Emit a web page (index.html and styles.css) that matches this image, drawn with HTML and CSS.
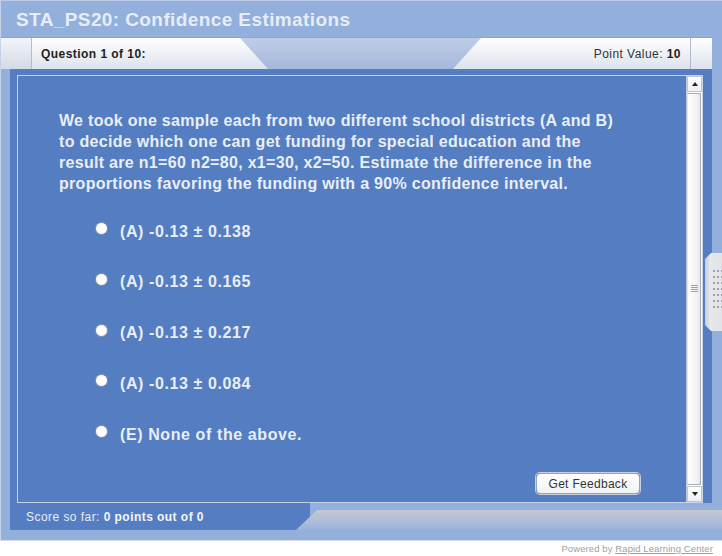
FILE: index.html
```html
<!DOCTYPE html>
<html>
<head>
<meta charset="utf-8">
<link rel="stylesheet" href="styles.css">
</head>
<body>
<div class="frame">
  <div class="titlebar">STA_PS20: Confidence Estimations</div>
  <div class="tabbar">
    <div class="tab-left"><div class="stub"></div><span class="qnum">Question 1 of 10:</span></div>
    <div class="tab-gap"></div>
    <div class="tab-right"><span class="pv">Point Value: <b>10</b></span><div class="stub-r"></div></div>
  </div>
  <div class="main">
    <div class="content">
      <div class="qarea">
        <p class="question">We took one sample each from two different school districts (A and B) to decide which one can get funding for special education and the result are n1=60 n2=80, x1=30, x2=50. Estimate the difference in the proportions favoring the funding with a 90% confidence interval.</p>
        <ul class="options">
          <li><span class="radio"></span>(A) -0.13 ± 0.138</li>
          <li><span class="radio"></span>(A) -0.13 ± 0.165</li>
          <li><span class="radio"></span>(A) -0.13 ± 0.217</li>
          <li><span class="radio"></span>(A) -0.13 ± 0.084</li>
          <li><span class="radio"></span>(E) None of the above.</li>
        </ul>
        <div class="actions"><button class="btn">Get Feedback</button></div>
      </div>
      <div class="scrollbar">
        <div class="sbtn"><span class="tri-up"></span></div>
        <div class="track"><span class="grip"></span></div>
        <div class="sbtn"><span class="tri-down"></span></div>
      </div>
    </div>
  </div>
  <div class="footer">
    <div class="score">Score so far: <b>0 points out of 0</b></div>
    <div class="ftab"></div>
  </div>
  <div class="handle">
    <div class="dots">
      <i></i><i></i><i></i><i></i><i></i><i></i><i></i><i></i><i></i><i></i><i></i><i></i><i></i><i></i><i></i><i></i><i></i><i></i><i></i><i></i><i></i>
    </div>
  </div>
</div>
<div class="powered">Powered by <a href="#">Rapid Learning Center</a></div>
</body>
</html>
```

FILE: styles.css
```css
* { box-sizing: border-box; }
body {
  margin: 0;
  width: 722px;
  background: #fff;
  font-family: "Liberation Sans", Arial, sans-serif;
}
.frame {
  position: relative;
  width: 722px;
  height: 541px;
  background: #93afdc;
  border-top: 1px solid #bccbe6;
  border-left: 1px solid #c6d2e8;
  border-bottom: 1px solid #d6dae2;
}
.titlebar {
  height: 36px;
  padding-left: 15px;
  line-height: 37px;
  font-size: 19px;
  font-weight: bold;
  color: #e6edf8;
  letter-spacing: 0.4px;
}
.tabbar {
  width: 711px;
  height: 32px;
  display: flex;
  background: linear-gradient(#bfcde6, #a6b9dc);
  border-top: 1px solid #8aa3cf;
}
.tab-left {
  width: 267px;
  display: flex;
  align-items: center;
  background: linear-gradient(#ffffff, #dde2ec);
  clip-path: polygon(0 0, 239px 0, 267px 100%, 0 100%);
}
.stub {
  width: 31px;
  height: 100%;
  border-right: 1px solid #b4bccc;
  background: linear-gradient(#f2f4f8, #d4dae6);
}
.qnum {
  padding-left: 9px;
  font-size: 12px;
  font-weight: bold;
  color: #222;
  letter-spacing: 0.45px;
}
.tab-gap { flex: 1; }
.tab-right {
  width: 259px;
  display: flex;
  align-items: center;
  justify-content: flex-end;
  background: linear-gradient(#ffffff, #dde2ec);
  clip-path: polygon(28px 0, 100% 0, 100% 100%, 0 100%);
}
.pv {
  font-size: 12px;
  color: #333;
  padding-right: 9px;
  letter-spacing: 0.45px;
}
.pv b { color: #222; }
.stub-r {
  width: 22px;
  height: 100%;
  border-left: 1px solid #b4bccc;
}
.main {
  margin-left: 9px;
  width: 702px;
  height: 434px;
  padding: 6px 9px 0 7px;
  background: #557dc1;
}
.content {
  height: 428px;
  display: flex;
  border: 1px solid #c8d2e6;
}
.qarea {
  flex: 1;
  display: flex;
  flex-direction: column;
  padding: 34px 0 0 41px;
}
.question {
  margin: 0;
  width: 562px;
  font-size: 16px;
  line-height: 21px;
  font-weight: bold;
  letter-spacing: 0.3px;
  color: #e8eef8;
}
.options {
  list-style: none;
  margin: 18px 0 0 36px;
  padding: 0;
}
.options li {
  display: flex;
  align-items: center;
  height: 39px;
  margin-top: 11.75px;
  font-size: 16px;
  font-weight: bold;
  letter-spacing: 0.6px;
  color: #e8eef8;
}
.options li:first-child { margin-top: 0; }
.radio {
  width: 13px;
  height: 13px;
  border-radius: 50%;
  background: radial-gradient(circle at 50% 40%, #ffffff 55%, #e4e8ee 100%);
  border: 1px solid #8e96a4;
  margin-right: 12px;
  margin-top: -6px;
}
.actions {
  margin-top: auto;
  margin-bottom: 8px;
  display: flex;
  justify-content: flex-end;
  padding-right: 46px;
}
.btn {
  width: 104px;
  height: 21px;
  padding: 0;
  font-family: "Liberation Sans", Arial, sans-serif;
  font-size: 12px;
  letter-spacing: 0.3px;
  color: #333;
  background: linear-gradient(#ffffff, #f0f2f4);
  border: 1px solid #9aa2ae;
  border-radius: 4px;
  box-shadow: 0 0 0 1px #c6cfdf;
}
.scrollbar {
  width: 16px;
  display: flex;
  flex-direction: column;
  background: #fff;
  border-left: 1px solid #c4cad4;
}
.sbtn {
  height: 16px;
  display: flex;
  align-items: center;
  justify-content: center;
  background: linear-gradient(#ffffff, #eceef2);
  border: 1px solid #c0c6d0;
}
.tri-up {
  width: 0; height: 0;
  border-left: 3px solid transparent;
  border-right: 3px solid transparent;
  border-bottom: 4px solid #222;
}
.tri-down {
  width: 0; height: 0;
  border-left: 3px solid transparent;
  border-right: 3px solid transparent;
  border-top: 4px solid #222;
}
.track {
  flex: 1;
  display: flex;
  align-items: center;
  justify-content: center;
  margin: 1px 1px 1px 0;
  background: linear-gradient(90deg, #ffffff, #f2f3f5 70%, #e6e8ec);
  border: 1px solid #a8aeb8;
  border-left: 1px solid #e0e3e8;
}
.grip {
  width: 7px;
  height: 8px;
  background: repeating-linear-gradient(#9aa2b0 0 1px, transparent 1px 2px);
}
.footer {
  display: flex;
  align-items: flex-end;
  height: 27px;
  padding-left: 9px;
}
.score {
  width: 300px;
  height: 27px;
  margin-right: -14px;
  padding: 7px 0 0 16px;
  background: #557dc1;
  font-size: 12px;
  letter-spacing: 0.45px;
  color: #e6edf8;
}
.score b { color: #f2f6fc; }
.ftab {
  flex: 1;
  height: 20px;
  background: linear-gradient(#c4c8d0, #a4b8dc 80%, #98b0dc);
  clip-path: polygon(21px 0, 100% 0, 100% 100%, 0 100%);
}
.handle {
  position: absolute;
  left: 704px;
  top: 252px;
  width: 18px;
  height: 78px;
  background: linear-gradient(90deg, #c8ccd4, #e6e8ec 30%, #e0e2e6);
  clip-path: polygon(6px 0, 100% 0, 100% 100%, 6px 100%, 0 72px, 0 6px);
  padding: 17px 0 0 8px;
}
.dots {
  display: grid;
  grid-template-columns: repeat(3, 2px);
  gap: 4px 2px;
}
.dots i {
  width: 2px;
  height: 2px;
  background: #9aa0ac;
}
.powered {
  padding: 2px 9px 0 0;
  text-align: right;
  font-size: 9.5px;
  color: #a0a0a0;
  letter-spacing: 0.1px;
}
.powered a { color: #a0a0a0; }
```
